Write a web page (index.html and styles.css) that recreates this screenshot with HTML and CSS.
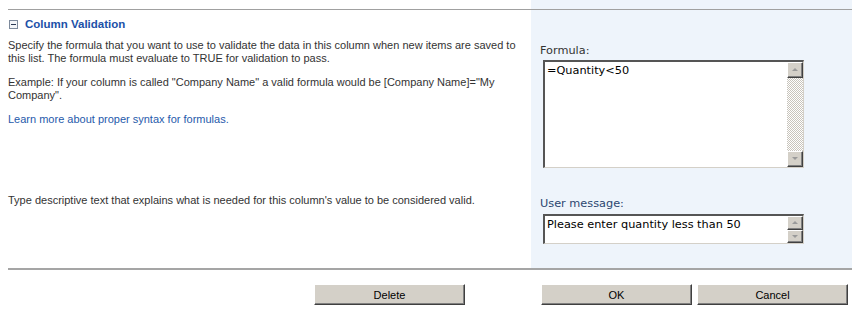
FILE: index.html
```html
<!doctype html>
<html lang="en">
<head>
    <meta charset="UTF-8">
    <title>Column Validation</title>
    <link rel="stylesheet" href="styles.css">
</head>
<body>
<div class="form">
    <div class="cell top"></div>
    <div class="cell top side"></div>

    <!-- section: formula -->
    <div class="cell main first">
        <h3 class="section-title">
            <svg class="toggle" width="9" height="9" viewBox="0 0 9 9">
                <rect x="0.5" y="0.5" width="8" height="8" fill="#f4f6f9" stroke="#7d8a9c"/>
                <rect x="2" y="4" width="5" height="1" fill="#2b3a55"/>
            </svg>Column Validation
        </h3>
        <p>Specify the formula that you want to use to validate the data in this column when new items are saved to<br>this list. The formula must evaluate to TRUE for validation to pass.</p>
        <p>Example: If your column is called "Company Name" a valid formula would be [Company Name]="My<br>Company".</p>
        <p><a href="#">Learn more about proper syntax for formulas.</a></p>
    </div>
    <div class="cell side first">
        <label class="field-label">Formula:</label>
        <div class="textbox tall">
            <div class="textbox-text">=Quantity&lt;50</div>
            <div class="scrollbar">
                <span class="scroll-btn up"></span>
                <span class="scroll-track"></span>
                <span class="scroll-btn down"></span>
            </div>
        </div>
    </div>

    <!-- section: user message -->
    <div class="cell main">
        <p class="msg-desc">Type descriptive text that explains what is needed for this column's value to be considered valid.</p>
    </div>
    <div class="cell side msg">
        <label class="field-label user">User message:</label>
        <div class="textbox short">
            <div class="textbox-text">Please enter quantity less than 50</div>
            <div class="scrollbar">
                <span class="scroll-btn up"></span>
                <span class="scroll-btn down"></span>
            </div>
        </div>
    </div>
</div>
<div class="form-line"></div>
<div class="buttons">
    <div class="buttons-left"><button class="btn">Delete</button></div>
    <div class="buttons-right"><button class="btn">OK</button><button class="btn">Cancel</button></div>
</div>
</body>
</html>
```

FILE: styles.css
```css
body{
    margin: 0;
    font-family: "Liberation Sans", Arial, sans-serif;
    font-size: 11px;
    color: #333;
    background: #fff;
}
.form{
    display: grid;
    grid-template-columns: 531px 321px;
    grid-template-rows: 9px 181px 78px;
}
.cell.main{
    margin-left: 8px;
}
.cell.side{
    background-color: #eef4fb;
}
.cell.first{
    border-top: 1px solid #a0a0a0;
}
.cell.main.first{
    padding-top: 8px;
}
.section-title{
    margin: 0 0 8px;
    display: flex;
    align-items: center;
    font-size: 11.5px;
    line-height: 13px;
    font-weight: bold;
    color: #2050a8;
}
.section-title .toggle{
    margin: 0 7px 0 1px;
}
.cell p{
    margin: 0 0 11px;
    line-height: 13px;
}
.cell a{
    color: #1f5aab;
    text-decoration: none;
}
.cell .msg-desc{
    padding-top: 4px;
}

/* right side fields */
.cell.side.first{
    padding-top: 34px;
}
.cell.side.msg{
    padding-top: 7px;
}
.field-label{
    display: block;
    margin-left: 9px;
    font-family: "DejaVu Sans", Verdana, sans-serif;
    font-size: 11.3px;
    line-height: 13px;
    color: #333;
}
.field-label.user{
    color: #2b4670;
}
.textbox{
    display: flex;
    box-sizing: border-box;
    width: 261px;
    margin: 3px 0 0 12px;
    background: #fff;
    border-style: solid;
    border-width: 2px 1px 1px 2px;
    border-color: #555 #d4d0c8 #d4d0c8 #555;
}
.textbox.tall{
    height: 108px;
}
.textbox.short{
    height: 30px;
    margin-top: 4px;
}
.textbox-text{
    flex: 1;
    padding: 2px 2px;
    font-family: "DejaVu Sans", Verdana, sans-serif;
    font-size: 11.3px;
    line-height: 13px;
    color: #000;
}
.scrollbar{
    display: flex;
    flex-direction: column;
    width: 16px;
}
.scroll-track{
    flex: 1;
    background-color: #fff;
    background-image: repeating-conic-gradient(#c8c4bc 0 25%, #fff 0 50%);
    background-size: 2px 2px;
}
.scroll-btn{
    position: relative;
    box-sizing: border-box;
    height: 16px;
    background: #d4d0c8;
    border: 1px solid;
    border-color: #fff #404040 #404040 #fff;
    box-shadow: inset -1px -1px #808080;
}
.short .scroll-btn{
    flex: 1;
    height: auto;
}
.scroll-btn::after{
    content: "";
    position: absolute;
    left: 4px;
    border-left: 3px solid transparent;
    border-right: 3px solid transparent;
}
.scroll-btn.up::after{
    top: 5px;
    border-bottom: 3px solid #9a9a9a;
}
.scroll-btn.down::after{
    top: 5px;
    border-top: 3px solid #9a9a9a;
}
.short .scroll-btn::after{
    top: 4px;
}

/* bottom bar */
.form-line{
    margin-left: 8px;
    border-top: 2px solid #a5a5a5;
}
.buttons{
    display: grid;
    grid-template-columns: 531px 321px;
    padding-top: 14px;
}
.buttons-left{
    display: flex;
    justify-content: flex-end;
    padding-right: 66px;
}
.buttons-right{
    display: flex;
    gap: 5px;
    padding-left: 10px;
}
.btn{
    box-sizing: border-box;
    width: 151px;
    height: 21px;
    padding: 0;
    font-family: "Liberation Sans", Arial, sans-serif;
    font-size: 11px;
    color: #000;
    background: #d4d0c8;
    border: 1px solid;
    border-color: #fff #404040 #404040 #fff;
    box-shadow: inset -1px -1px #808080;
    border-radius: 0;
}
```
